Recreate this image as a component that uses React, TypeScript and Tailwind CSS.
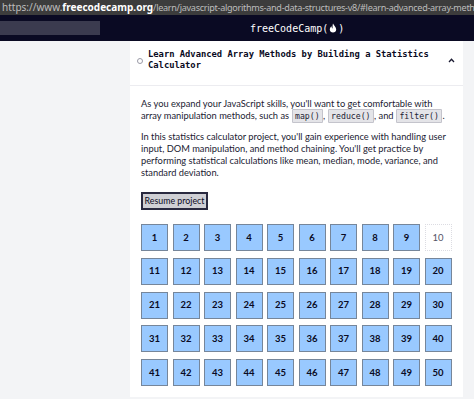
import React from 'react';

const cells = Array.from({ length: 50 }, (_, i) => i + 1);

function Code({ children }: { children: React.ReactNode }) {
  return (
    <code className="mx-[0.5px] rounded-[1px] border border-[#c4c4cc] bg-[#e4e4e8] px-[2px] py-[1px] font-['DejaVu_Sans_Mono',monospace] text-[8.2px] text-[#1b1b32]">
      {children}
    </code>
  );
}

function Flame() {
  return (
    <svg width="8" height="10" viewBox="0 0 8 10" className="mx-[1px] inline-block align-[-1px]">
      <path d="M4 0.5C4.6 2.4 7.2 3.8 7.2 6.6C7.2 8.5 5.8 9.6 4 9.6C2.2 9.6 0.8 8.5 0.8 6.6C0.8 5 1.8 3.9 2.6 3.2C2.6 4.4 3 5.1 3.6 5.4C3.5 3.6 3.6 1.8 4 0.5Z" fill="white" />
    </svg>
  );
}

export default function App() {
  return (
    <div className="h-[399px] w-[474px] overflow-hidden bg-[#f3f4f6] font-['Lato',sans-serif]">
      <div className="h-[15px] overflow-hidden whitespace-nowrap bg-[#3c3c3c] pl-[2px] font-['Noto_Sans',sans-serif] text-[10px] leading-[15px] text-[#bdbdbd]">
        https://www.<span className="font-bold text-white">freecodecamp.org</span>
        <span className="text-[9.1px] tracking-[-0.3px]">/learn/javascript-algorithms-and-data-structures-v8/#learn-advanced-array-methods-by-building</span>
      </div>
      <nav className="flex h-[26px] items-center bg-[#0a0a23]">
        <div className="h-[14px] w-[100px] bg-[#3b3b4f]" />
        <div className="ml-[150px] flex items-center font-['DejaVu_Sans_Mono',monospace] text-[10px] text-white">
          freeCodeCamp(<Flame />)
        </div>
      </nav>
      <div className="flex">
        <div className="w-[130px]" />
        <section className="h-[356px] w-[333px] bg-white">
          <div className="relative flex h-[45px] items-start border-b border-[#ececf0] pl-[7px] pt-[8px]">
            <span className="mt-[9px] h-[6px] w-[6px] shrink-0 rounded-full border border-[#9a9aa6]" />
            <h3 className="ml-[5px] w-[290px] font-['DejaVu_Sans_Mono',monospace] text-[8.8px] font-bold leading-[10.5px] text-[#0a0a23]">
              Learn Advanced Array Methods by Building a Statistics Calculator
            </h3>
            <svg width="7" height="5" viewBox="0 0 7 5" className="absolute right-[8px] top-[17px]">
              <path d="M1 4L3.5 1.3L6 4" stroke="#1b1b32" strokeWidth="1.3" fill="none" />
            </svg>
          </div>
          <div className="px-[11px] pt-[12px] text-[9.3px] leading-[12px] text-[#1b1b32]">
            <p>
              As you expand your JavaScript skills, you'll want to get comfortable with array manipulation methods, such as <Code>map()</Code>, <Code>reduce()</Code>, and <Code>filter()</Code>.
            </p>
            <p className="mt-[9px]">
              In this statistics calculator project, you'll gain experience with handling user input, DOM manipulation, and method chaining. You'll get practice by performing statistical calculations like mean, median, mode, variance, and standard deviation.
            </p>
            <button className="mt-[13px] h-[18px] w-[67px] border-2 border-[#2a2a40] bg-[#d0d0d5] text-[8.8px] leading-[14px] text-[#0a0a23]">
              Resume project
            </button>
            <div className="mt-[14px] grid grid-cols-[repeat(10,27px)] gap-x-[4.5px] gap-y-[6.8px]">
              {cells.map((n) =>
                n === 10 ? (
                  <div key={n} className="flex h-[27px] items-center justify-center border border-dotted border-[#dcdce2] text-[9.5px] text-[#555566]">
                    {n}
                  </div>
                ) : (
                  <div key={n} className="flex h-[27px] items-center justify-center border border-[#76869a] bg-[#99c9ff] text-[9.5px] font-bold text-[#0a0a23]">
                    {n}
                  </div>
                ),
              )}
            </div>
          </div>
        </section>
      </div>
    </div>
  );
}
